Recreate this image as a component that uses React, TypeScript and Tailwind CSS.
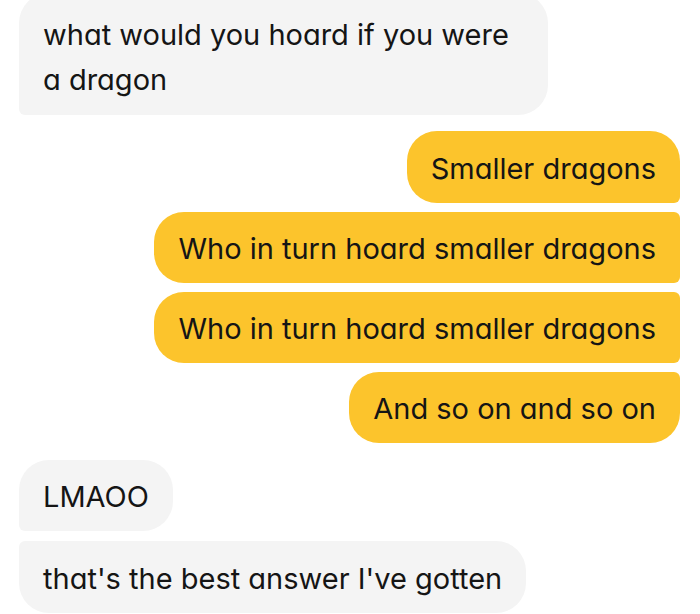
import React from "react";

const gray = "bg-[#f4f4f4]";
const yellow = "bg-[#fcc42c]";

export default function App() {
  return (
    <div className="w-[700px] h-[614px] overflow-hidden bg-white font-['Inter',sans-serif] [font-feature-settings:'cv11'] text-[#151515] text-[29px]">
      <div className="flex flex-col pl-[19px] pr-[20px] -mt-[7px]">
        <div className={`${gray} self-start w-[529px] rounded-tl-[30px] rounded-tr-[30px] rounded-br-[30px] rounded-bl-[6px] pl-[24px] pr-[24px] pt-[19px] pb-[13px] leading-[45px]`}>
          what would you hoard if you were
          <br />a dragon
        </div>
        <div className="flex flex-col items-end gap-[9px] mt-[16px]">
          <div className={`${yellow} h-[72px] flex items-center px-[24px] pt-[3px] rounded-tl-[30px] rounded-bl-[30px] rounded-tr-[30px] rounded-br-[6px]`}>Smaller dragons</div>
          <div className={`${yellow} h-[71px] flex items-center px-[24px] pt-[3px] rounded-tl-[30px] rounded-bl-[30px] rounded-tr-[6px] rounded-br-[6px]`}>Who in turn hoard smaller dragons</div>
          <div className={`${yellow} h-[71px] flex items-center px-[24px] pt-[3px] rounded-tl-[30px] rounded-bl-[30px] rounded-tr-[6px] rounded-br-[6px]`}>Who in turn hoard smaller dragons</div>
          <div className={`${yellow} h-[71px] flex items-center px-[24px] pt-[3px] rounded-tl-[30px] rounded-bl-[30px] rounded-tr-[6px] rounded-br-[30px]`}>And so on and so on</div>
        </div>
        <div className="flex flex-col items-start gap-[10px] mt-[17px]">
          <div className={`${gray} h-[71px] flex items-center px-[24px] pt-[3px] rounded-tl-[30px] rounded-tr-[30px] rounded-br-[30px] rounded-bl-[6px]`}>LMAOO</div>
          <div className={`${gray} h-[72px] flex items-center px-[24px] pt-[3px] rounded-tl-[6px] rounded-tr-[30px] rounded-br-[30px] rounded-bl-[30px]`}>that's the best answer I've gotten</div>
        </div>
      </div>
    </div>
  );
}
